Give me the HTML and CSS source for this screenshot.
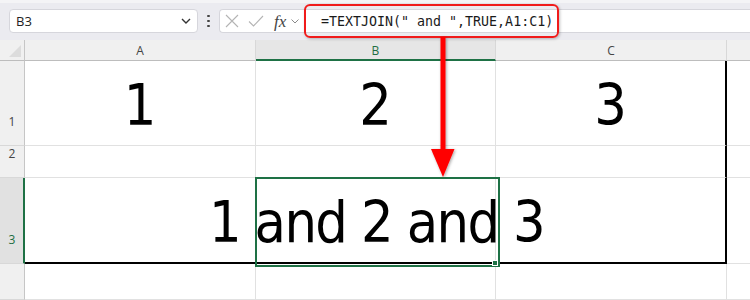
FILE: index.html
```html
<!DOCTYPE html>
<html>
<head>
<meta charset="utf-8">
<link rel="stylesheet" href="styles.css">
</head>
<body>
<div class="app">
  <div class="toolbar">
    <div class="namebox">
      <span class="nb-text">B3</span>
      <svg class="nb-chev" width="10" height="6" viewBox="0 0 10 6"><path d="M1 1 L5 5 L9 1" fill="none" stroke="#333" stroke-width="1.4"/></svg>
    </div>
    <div class="dots"><i></i><i></i><i></i></div>
    <div class="fbar">
      <div class="ficons">
        <svg class="ic" width="14" height="14" viewBox="0 0 14 14"><path d="M1 1 L13 13 M13 1 L1 13" stroke="#b4b4b4" stroke-width="1.1" fill="none"/></svg>
        <svg class="ic" width="16" height="14" viewBox="0 0 16 14"><path d="M1 7.5 L5.5 12 L15 2" stroke="#b4b4b4" stroke-width="1.1" fill="none"/></svg>
        <span class="fx">fx</span>
        <svg class="fx-chev" width="8" height="5" viewBox="0 0 8 5"><path d="M0.5 0.5 L4 4 L7.5 0.5" fill="none" stroke="#8a8a8a" stroke-width="1"/></svg>
      </div>
      <div class="formula">=TEXTJOIN(" and ",TRUE,A1:C1)</div>
    </div>
  </div>

  <div class="sheet">
    <div class="corner"><span class="tri"></span></div>
    <div class="colhead">A</div>
    <div class="colhead sel">B</div>
    <div class="colhead">C</div>
    <div class="colhead last"></div>

    <div class="rowhead">1</div>
    <div class="cell">1</div>
    <div class="cell">2</div>
    <div class="cell edge-r">3</div>
    <div class="cell last"></div>

    <div class="rowhead">2</div>
    <div class="cell"></div>
    <div class="cell"></div>
    <div class="cell edge-r"></div>
    <div class="cell last"></div>

    <div class="rowhead sel">3</div>
    <div class="cell edge-b"></div>
    <div class="cell edge-b active"><span class="txt">1 and 2 and 3</span><span class="handle"></span></div>
    <div class="cell edge-b edge-r"></div>
    <div class="cell last"></div>

    <div class="rowhead"></div>
    <div class="cell"></div>
    <div class="cell"></div>
    <div class="cell"></div>
    <div class="cell last"></div>
  </div>

  <div class="callout"></div>
  <svg class="arrow" width="750" height="300" viewBox="0 0 750 300">
    <defs>
      <filter id="sh" x="-50%" y="-10%" width="200%" height="120%">
        <feDropShadow dx="1" dy="1" stdDeviation="1.5" flood-color="#000" flood-opacity="0.35"/>
      </filter>
    </defs>
    <g filter="url(#sh)" fill="#ff0000">
      <rect x="440.5" y="37" width="5" height="114"/>
      <polygon points="431,149 454.5,149 443,177"/>
    </g>
  </svg>
</div>
</body>
</html>
```

FILE: styles.css
```css
* { box-sizing: border-box; }
html, body { margin: 0; padding: 0; }
body {
  width: 750px;
  height: 300px;
  overflow: hidden;
  background: #ffffff;
  font-family: "Open Sans", "Noto Sans", sans-serif;
}
.app {
  position: relative;
  width: 750px;
  height: 300px;
}

/* toolbar */
.toolbar {
  height: 40px;
  background: #ebebf0;
  border-top: 3px solid #f4f4f6;
  display: flex;
  align-items: flex-start;
  padding: 6px 0 0 9px;
}
.namebox {
  width: 189px;
  height: 24px;
  background: #fff;
  border: 1px solid #d6d6dc;
  border-radius: 4px;
  display: flex;
  align-items: center;
  justify-content: space-between;
  padding: 0 6px 0 6px;
}
.nb-text {
  font-size: 13px;
  color: #222;
  font-family: "Open Sans", sans-serif;
}
.dots {
  width: 21px;
  height: 24px;
  display: flex;
  flex-direction: column;
  align-items: center;
  justify-content: center;
  gap: 2.5px;
}
.dots i {
  display: block;
  width: 2.5px;
  height: 2.5px;
  background: #444;
  border-radius: 50%;
}
.fbar {
  flex: 1;
  height: 24px;
  background: #fff;
  border: 1px solid #d6d6dc;
  border-right: none;
  border-radius: 4px 0 0 4px;
  display: flex;
  align-items: center;
}
.ficons {
  width: 91px;
  height: 100%;
  display: flex;
  align-items: center;
  padding-left: 5px;
}
.ficons .ic { margin-right: 9px; }
.fx {
  font-family: "Liberation Serif", serif;
  font-style: italic;
  font-size: 17px;
  color: #444;
  margin-left: 1px;
  line-height: 1;
}
.fx-chev { margin-left: 5px; margin-top: 1px; }
.formula {
  padding-left: 10px;
  font-family: "DejaVu Sans Mono", monospace;
  font-size: 13.3px;
  color: #1a1a1a;
  white-space: pre;
  padding-top: 1px;
}

/* sheet grid */
.sheet {
  display: grid;
  grid-template-columns: 25px 231px 240px 231px 1fr;
  grid-template-rows: 21px 85px 32px 86px 1fr;
  height: 260px;
}
.corner {
  background: #f0f0f0;
  border-right: 1px solid #c6c6c6;
  border-bottom: 1px solid #bdbdbd;
  position: relative;
}
.tri {
  position: absolute;
  right: 3px;
  bottom: 3px;
  width: 0;
  height: 0;
  border-left: 12px solid transparent;
  border-bottom: 12px solid #dcdcdc;
}
.colhead {
  background: #f0f0f0;
  border-right: 1px solid #d8d8d8;
  border-bottom: 1px solid #bdbdbd;
  font-size: 12px;
  color: #444;
  display: flex;
  align-items: center;
  justify-content: center;
  padding-top: 1px;
}
.colhead.sel {
  background: #e6e6e6;
  color: #1e6e42;
  border-bottom: 2px solid #1e7145;
}
.colhead.last { border-right: none; }

.rowhead {
  background: #f0f0f0;
  border-right: 1px solid #c6c6c6;
  border-bottom: 1px solid #d8d8d8;
  font-size: 12px;
  line-height: 14px;
  color: #444;
  display: flex;
  align-items: flex-end;
  justify-content: center;
  padding-bottom: 16px;
}
.rowhead.sel {
  background: #e1e1e1;
  color: #1e6e42;
  border-right: 2px solid #1e7145;
  padding-left: 1px;
}

.cell {
  border-right: 1px solid #e1e1e1;
  border-bottom: 1px solid #e1e1e1;
  font-family: "DejaVu Sans Condensed", "DejaVu Sans", sans-serif;
  font-stretch: condensed;
  font-size: 57px;
  line-height: 57px;
  color: #000;
  display: flex;
  align-items: flex-end;
  justify-content: center;
  padding-bottom: 11px;
  white-space: nowrap;
}
.cell.last { border-right: none; }
.cell.edge-r { border-right: 2px solid #000; }
.cell.edge-b { border-bottom: 2px solid #000; }

.cell.active {
  position: relative;
  z-index: 2;
}
.cell.active::after {
  content: "";
  position: absolute;
  left: -1px;
  top: -1px;
  width: 241px;
  height: 86px;
  border: 2px solid #1e7145;
  pointer-events: none;
}
.txt {
  display: block;
  letter-spacing: -1.6px;
  padding-left: 2px;
}
.handle {
  position: absolute;
  left: 236px;
  top: 82px;
  width: 6px;
  height: 6px;
  background: #1e7145;
  border: 1px solid #fff;
  z-index: 3;
}

/* annotations */
.callout {
  position: absolute;
  left: 304px;
  top: 4px;
  width: 255px;
  height: 34px;
  border: 2px solid #f01b1b;
  border-radius: 6px;
  box-shadow: 1px 1px 3px rgba(0,0,0,0.25);
  pointer-events: none;
}
.arrow {
  position: absolute;
  left: 0;
  top: 0;
  pointer-events: none;
}
```
